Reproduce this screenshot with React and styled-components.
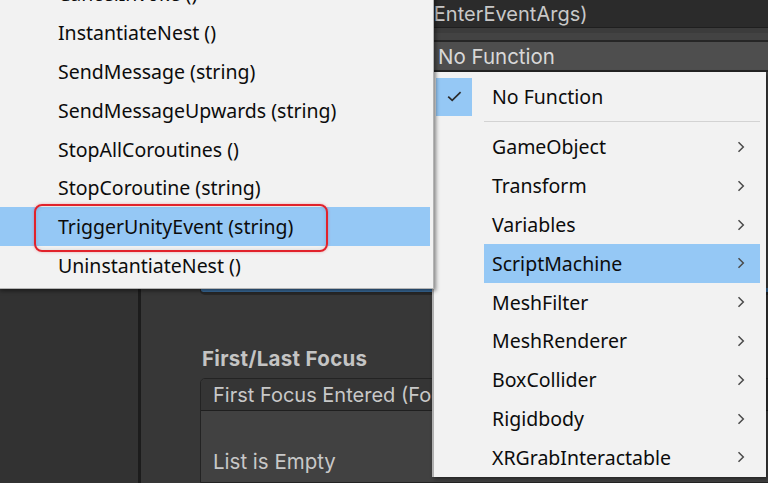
import styled, { createGlobalStyle } from "styled-components";

const GlobalStyle = createGlobalStyle`
  html, body {
    margin: 0;
    padding: 0;
    background: #373737;
    overflow: hidden;
  }
  #root {
    width: 768px;
    height: 483px;
  }
`;

const Screen = styled.div`
  position: relative;
  width: 768px;
  height: 483px;
  overflow: hidden;
  display: flex;
  background: #373737;
  font-family: Inter, "Noto Sans", sans-serif;
`;

const LeftPane = styled.div`
  width: 138px;
  flex-shrink: 0;
  background: #323232;
`;

const Divider = styled.div`
  width: 3px;
  flex-shrink: 0;
  background: #1c1c1c;
`;

const Inspector = styled.div`
  flex: 1;
  display: flex;
  flex-direction: column;
  min-width: 0;
`;

const EventBox = styled.div`
  margin-left: 59px;
  margin-right: -20px;
  border: 1px solid #242424;
  border-top: none;
  border-bottom: 3px solid #282828;
  border-radius: 0 0 5px 5px;
  overflow: hidden;
  display: flex;
  flex-direction: column;
`;

const ListHeader = styled.div`
  height: ${(p) => p.$h}px;
  flex-shrink: 0;
  display: flex;
  align-items: center;
  padding-left: ${(p) => p.$indent}px;
  background: ${(p) => p.$bg};
  border-bottom: 1px solid #1f1f1f;
  color: #c8c8c8;
  font-size: 20px;
  white-space: nowrap;
`;

const ElementTop = styled.div`
  height: 12px;
  background: linear-gradient(#3c3c3c 5px, #434343 5px);
`;

const ElementRow = styled.div`
  display: grid;
  grid-template-columns: 232px 1fr;
  border-top: 2px solid #262626;
  border-bottom: 2px solid #242424;
  background: #414141;
`;

const FunctionField = styled.div`
  height: 28px;
  display: flex;
  align-items: center;
  padding-left: 5px;
  background: #4e4e4e;
  color: #d8d8d8;
  font-size: 20.5px;
  white-space: nowrap;
`;

const ElementRest = styled.div`
  height: 216px;
  background: #414141;
`;

const SelectedEdge = styled.div`
  height: 4px;
  background: #3a6c9c;
`;

const SectionLabel = styled.div`
  margin: 52px 0 7px 61px;
  line-height: 24px;
  font-size: 20.5px;
  font-weight: 700;
  letter-spacing: 0.3px;
  color: #c4c4c4;
`;

const ListBox = styled.div`
  margin-left: 59px;
  margin-right: -20px;
  border: 1px solid #232323;
  border-radius: 5px 5px 0 0;
  overflow: hidden;
  flex: 1;
  display: flex;
  flex-direction: column;
  background: #414141;
`;

const EmptyBody = styled.div`
  padding: 39px 0 0 12px;
  line-height: 24px;
  font-size: 20.5px;
  color: #c8c8c8;
`;

/* ---------- popup menus ---------- */

const MenuBase = styled.div`
  position: absolute;
  background: #f2f2f2;
  font-family: "Noto Sans", "Open Sans", sans-serif;
  font-size: 19.5px;
  color: #0c0c0c;
  box-shadow: 2px 2px 4px rgba(0, 0, 0, 0.45);
`;

const MethodMenu = styled(MenuBase)`
  left: -2px;
  top: -29.5px;
  width: 436px;
  padding: 3px 3px 3px 0;
  border: 1px solid #b4b4b4;
  box-sizing: border-box;
  z-index: 3;
`;

const MethodItem = styled.div`
  position: relative;
  height: 38.8px;
  display: flex;
  align-items: center;
  padding-left: 59px;
  background: ${(p) => (p.$active ? "#95c8f5" : "transparent")};
  white-space: nowrap;
`;

const Callout = styled.div`
  position: absolute;
  left: 35px;
  top: -3px;
  width: 294px;
  height: 48px;
  box-sizing: border-box;
  border: 2px solid #e1222b;
  border-radius: 8px;
  box-shadow: 0 0 3px rgba(225, 34, 43, 0.35), inset 0 0 4px rgba(0, 0, 0, 0.12);
`;

const ComponentMenu = styled(MenuBase)`
  left: 432px;
  top: 72px;
  width: 334px;
  padding-top: 5.6px;
  border-left: 2px solid #b0b0b0;
  box-sizing: border-box;
  z-index: 2;
`;

const MenuItem = styled.div`
  display: grid;
  grid-template-columns: 50px 1fr;
  height: 38.8px;
`;

const CheckCell = styled.div`
  margin-left: 2px;
  width: 36px;
  display: flex;
  align-items: center;
  justify-content: center;
  background: ${(p) => (p.$checked ? "#95c8f5" : "transparent")};
`;

const LabelCell = styled.div`
  display: flex;
  align-items: center;
  justify-content: space-between;
  padding: 0 15px 0 8px;
  margin-right: 6px;
  background: ${(p) => (p.$active ? "#95c8f5" : "transparent")};
  white-space: nowrap;
`;

const Separator = styled.div`
  height: 11.2px;
  display: flex;
  align-items: center;
  padding: 0 6px 0 50px;
  &::after {
    content: "";
    flex: 1;
    height: 1px;
    background: #d3d3d3;
  }
`;

const Chevron = () => (
  <svg width="8" height="12" viewBox="0 0 8 12" fill="none">
    <path d="M1.5 1.2 L6.3 6 L1.5 10.8" stroke="#4a4a4a" strokeWidth="1.5" />
  </svg>
);

const Check = () => (
  <svg width="15" height="11" viewBox="0 0 15 11" fill="none">
    <path d="M1.2 5.6 L5.2 9.4 L13.6 1.2" stroke="#2b2b2b" strokeWidth="1.7" />
  </svg>
);

const methods = [
  "CancelInvoke ()",
  "InstantiateNest ()",
  "SendMessage (string)",
  "SendMessageUpwards (string)",
  "StopAllCoroutines ()",
  "StopCoroutine (string)",
  "TriggerUnityEvent (string)",
  "UninstantiateNest ()",
];

const components = [
  "GameObject",
  "Transform",
  "Variables",
  "ScriptMachine",
  "MeshFilter",
  "MeshRenderer",
  "BoxCollider",
  "Rigidbody",
  "XRGrabInteractable",
];

export default function App() {
  return (
    <>
      <GlobalStyle />
      <Screen>
        <LeftPane />
        <Divider />
        <Inspector>
          <EventBox>
            <ListHeader $h={27} $indent={28} $bg="#2b2b2b">
              Hover Entered (HoverEnterEventArgs)
            </ListHeader>
            <ElementTop />
            <ElementRow>
              <div />
              <FunctionField>No Function</FunctionField>
            </ElementRow>
            <ElementRest />
            <SelectedEdge />
          </EventBox>

          <SectionLabel>First/Last Focus</SectionLabel>
          <ListBox>
            <ListHeader $h={31} $indent={12} $bg="#353535">
              First Focus Entered (FocusEnterEventArgs)
            </ListHeader>
            <EmptyBody>List is Empty</EmptyBody>
          </ListBox>
        </Inspector>

        <MethodMenu>
          {methods.map((m) => (
            <MethodItem key={m} $active={m.startsWith("Trigger")}>
              {m}
              {m.startsWith("Trigger") && <Callout />}
            </MethodItem>
          ))}
        </MethodMenu>

        <ComponentMenu>
          <MenuItem>
            <CheckCell $checked>
              <Check />
            </CheckCell>
            <LabelCell>No Function</LabelCell>
          </MenuItem>
          <Separator />
          {components.map((c) => (
            <MenuItem key={c}>
              <CheckCell />
              <LabelCell $active={c === "ScriptMachine"}>
                {c}
                <Chevron />
              </LabelCell>
            </MenuItem>
          ))}
        </ComponentMenu>
      </Screen>
    </>
  );
}
